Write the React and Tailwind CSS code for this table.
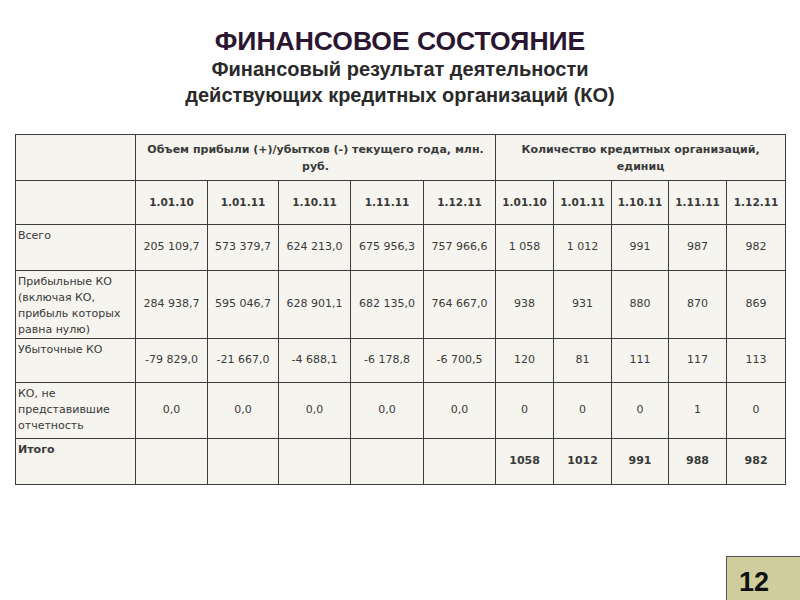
export default function App() {
  const dates = ["1.01.10", "1.01.11", "1.10.11", "1.11.11", "1.12.11"];
  const rows = [
    { label: "Всего", h: "h-[46px]", vals: ["205 109,7", "573 379,7", "624 213,0", "675 956,3", "757 966,6", "1 058", "1 012", "991", "987", "982"] },
    { label: "Прибыльные КО (включая КО, прибыль которых равна нулю)", h: "h-[65px]", vals: ["284 938,7", "595 046,7", "628 901,1", "682 135,0", "764 667,0", "938", "931", "880", "870", "869"] },
    { label: "Убыточные КО", h: "h-[44px]", vals: ["-79 829,0", "-21 667,0", "-4 688,1", "-6 178,8", "-6 700,5", "120", "81", "111", "117", "113"] },
    { label: "КО, не представившие отчетность", h: "h-[56px]", vals: ["0,0", "0,0", "0,0", "0,0", "0,0", "0", "0", "0", "1", "0"] },
  ];
  const cell = "border border-[#3c3c3c] text-[#3a3a3a]";
  return (
    <div className="relative w-[800px] h-[600px] bg-white overflow-hidden" style={{ fontFamily: "'DejaVu Sans', Verdana, sans-serif" }}>
      <div className="pt-[26px] text-center text-[#2a1630]" style={{ fontFamily: "'Liberation Sans', Arial, sans-serif" }}>
        <div className="text-[26.5px] leading-[30px] font-bold">ФИНАНСОВОЕ СОСТОЯНИЕ</div>
        <div className="text-[20px] leading-[26px] font-bold text-[#2a2a2a]">Финансовый результат деятельности</div>
        <div className="text-[20px] leading-[26px] font-bold text-[#2a2a2a]">действующих кредитных организаций (КО)</div>
      </div>
      <div className="pl-[15px] pt-[26px]">
        <table className="table-fixed border-collapse bg-[#f5f4ee] w-[770px] text-[11px]">
          <colgroup>
            <col className="w-[120px]" />
            <col className="w-[72px]" />
            <col className="w-[71px]" />
            <col className="w-[72px]" />
            <col className="w-[73px]" />
            <col className="w-[72px]" />
            <col className="w-[58px]" />
            <col className="w-[58px]" />
            <col className="w-[57px]" />
            <col className="w-[58px]" />
            <col className="w-[59px]" />
          </colgroup>
          <tbody>
            <tr className="h-[46px]">
              <td className={cell}></td>
              <td colSpan={5} className={`${cell} text-center font-bold leading-[17px] text-[11px]`}>
                Объем прибыли (+)/убытков (-) текущего года, млн.<br />руб.
              </td>
              <td colSpan={5} className={`${cell} text-center font-bold leading-[17px] text-[11px]`}>
                Количество кредитных организаций,<br />единиц
              </td>
            </tr>
            <tr className="h-[44px]">
              <td className={cell}></td>
              {[...dates, ...dates].map((d, i) => (
                <td key={i} className={`${cell} text-center font-bold text-[10.5px]`}>{d}</td>
              ))}
            </tr>
            {rows.map((r, ri) => (
              <tr key={ri} className={r.h}>
                <td className={`${cell} align-top pl-[2px] pt-[3px] leading-[16px]`}>{r.label}</td>
                {r.vals.map((v, i) => (
                  <td key={i} className={`${cell} text-center whitespace-nowrap`}>{v}</td>
                ))}
              </tr>
            ))}
            <tr className="h-[46px]">
              <td className={`${cell} align-top pl-[2px] pt-[3px] leading-[16px] font-bold`}>Итого</td>
              <td className={cell}></td>
              <td className={cell}></td>
              <td className={cell}></td>
              <td className={cell}></td>
              <td className={cell}></td>
              {["1058", "1012", "991", "988", "982"].map((v, i) => (
                <td key={i} className={`${cell} text-center font-bold`}>{v}</td>
              ))}
            </tr>
          </tbody>
        </table>
      </div>
      <div className="absolute left-[726px] top-[556px] w-[80px] h-[50px] bg-[#d0cd9c] border border-[#555] flex items-start justify-start">
        <span className="ml-[12px] mt-[5px] text-[27px] font-bold text-[#111]" style={{ fontFamily: "'Liberation Sans', Arial, sans-serif" }}>12</span>
      </div>
    </div>
  );
}
